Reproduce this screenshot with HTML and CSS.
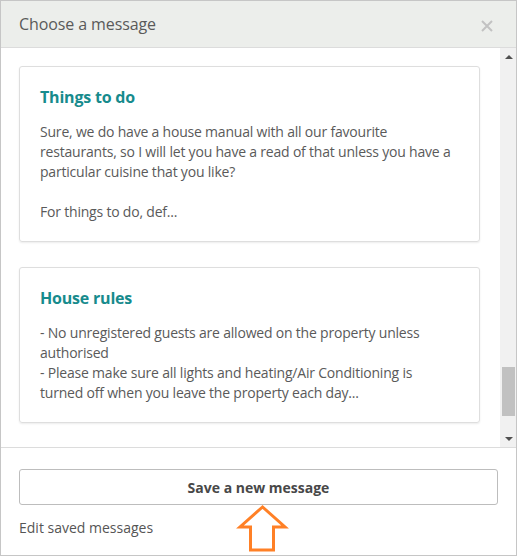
FILE: index.html
```html
<!DOCTYPE html>
<html>

<head>
    <title>Choose a message</title>
    <link rel="stylesheet" href="styles.css">
</head>

<body>
    <div class="dialog">
        <div class="dialog-head">
            <span class="dialog-title">Choose a message</span>
            <svg class="close" width="14" height="14" viewBox="0 0 14 14">
                <path d="M2 2 L12 12 M12 2 L2 12" stroke="#c2c2c2" stroke-width="2" />
            </svg>
        </div>

        <div class="list-wrap">
            <div class="msg-list" id="list">
                <div class="card">
                    <h3 class="card-title">Welcome</h3>
                    <p class="card-text">Hi! Thanks so much for booking with us, we are really looking forward to having you stay and showing you around the neighbourhood.<br><br>Let me know if you have any questions before...</p>
                </div>
                <div class="card">
                    <h3 class="card-title">Check-in instructions</h3>
                    <p class="card-text">The key is in the lockbox next to the front door. The code is the last four digits of your phone number, just push the button down to open it.<br><br>The flat is on the second floor, first door...</p>
                </div>
                <div class="card">
                    <h3 class="card-title">Wi-Fi</h3>
                    <p class="card-text">The network name and password are on the little card on the fridge, and there is a second router in the bedroom if the signal is weak.<br><br>If it drops out, turn the router off and on again...</p>
                </div>
                <div class="card">
                    <h3 class="card-title">Parking</h3>
                    <p class="card-text">There is one free space in the garage under the building, number 12. The remote for the gate is on the key ring with the house keys and the post box key.<br><br>Street parking is free after 6pm...</p>
                </div>
                <div class="card">
                    <h3 class="card-title">Early check-in</h3>
                    <p class="card-text">Unfortunately we have guests leaving that morning, so the earliest we can do is 2pm. You are welcome to drop your bags off in the storage room downstairs from 11am though, and grab a coffee at the cafe on the corner.<br><br>Just send me a message when...</p>
                </div>
                <div class="card">
                    <h3 class="card-title">Late check-out</h3>
                    <p class="card-text">No problem at all, there is nobody arriving after you so you can stay until 1pm. Just leave the keys on the kitchen table and pull the door closed behind you.<br><br>Have a safe trip home...</p>
                </div>
                <div class="card">
                    <h3 class="card-title">Getting here</h3>
                    <p class="card-text">The easiest way from the airport is the express train to the central station, then the number 4 tram which stops right outside the building. A taxi takes about forty minutes depending on traffic and costs around 35 euros.<br><br>If you are driving, the postcode...</p>
                </div>
                <div class="card">
                    <h3 class="card-title">Towels and linen</h3>
                    <p class="card-text">Fresh towels and linen are in the wardrobe in the hallway. Extra blankets and pillows are in the top drawer, and the hairdryer is under the bathroom sink.<br><br>Beach towels are in the basket...</p>
                </div>
                <div class="card">
                    <h3 class="card-title">Thank you</h3>
                    <p class="card-text">Thanks so much for staying with us! We hope you had a lovely time in the city and that the flat had everything you needed, we really enjoyed having you.<br><br>It would be great if you could leave us a review...</p>
                </div>
                <div class="card">
                    <h3 class="card-title">Rubbish and recycling</h3>
                    <p class="card-text">The bins are in the courtyard downstairs. Blue is for paper and plastic, green for glass and black for everything else. Collection is on Tuesday and Friday mornings, so please take it down the night before if you can.<br><br>There are spare bags under...</p>
                </div>
                <div class="card">
                    <h3 class="card-title">Heating</h3>
                    <p class="card-text">The thermostat is in the hallway next to the bathroom door. Please turn it down when you go out for the day, it warms up again in about twenty minutes.<br><br>The radiators in the bedroom...</p>
                </div>
                <div class="card">
                    <h3 class="card-title">Laundry</h3>
                    <p class="card-text">The washing machine is in the kitchen cupboard and there is detergent on the shelf above it. There is a drying rack behind the bathroom door.<br><br>Please do not use the dryer setting...</p>
                </div>
                <div class="card" id="first">
                    <h3 class="card-title">Things to do</h3>
                    <p class="card-text">Sure, we do have a house manual with all our favourite restaurants, so I will let you have a read of that unless you have a particular cuisine that you like?<br><br>For things to do, def...</p>
                </div>
                <div class="card">
                    <h3 class="card-title">House rules</h3>
                    <p class="card-text">- No unregistered guests are allowed on the property unless authorised<br>- Please make sure all lights and heating/Air Conditioning is turned off when you leave the property each day...</p>
                </div>
                <div class="card">
                    <h3 class="card-title">Quiet hours</h3>
                    <p class="card-text">Please keep the noise down between 10pm and 8am, thank you!</p>
                </div>
            </div>

            <div class="scrollbar">
                <div class="sb-btn"><span class="arrow-up"></span></div>
                <div class="sb-track" id="track">
                    <div class="sb-thumb" id="thumb"></div>
                </div>
                <div class="sb-btn"><span class="arrow-down"></span></div>
            </div>
        </div>

        <div class="dialog-foot">
            <button class="btn-save">Save a new message</button>
            <a class="edit-link">Edit saved messages</a>
        </div>

        <svg class="pointer" width="54" height="52" viewBox="0 0 54 52">
            <polygon points="26.5,4 4,24 14.5,24 14.5,47 37.5,47 37.5,24 49,24" fill="none" stroke="#ff8026" stroke-width="3" />
        </svg>
    </div>

    <script src="main.js"></script>
</body>

</html>
```
FILE: styles.css
```css
body {
    margin: 0;
    font-family: "Open Sans", "Liberation Sans", sans-serif;
    color: #555;
}

.dialog {
    position: relative;
    width: 517px;
    height: 556px;
    box-sizing: border-box;
    border: 1px solid #c6c6c6;
    display: flex;
    flex-direction: column;
    background: #fff;
}

.dialog-head {
    height: 46px;
    flex: none;
    background: #eceeeb;
    border-bottom: 1px solid #dcdcdc;
    display: flex;
    align-items: center;
    justify-content: space-between;
    padding: 0 22px 0 18px;
}

.dialog-title {
    font-size: 16px;
    color: #5a5a5a;
    margin-top: -1px;
    letter-spacing: -0.1px;
}

.close {
    margin-top: 4px;
}

.list-wrap {
    flex: 1;
    display: flex;
    min-height: 0;
}

.msg-list {
    flex: 1;
    overflow-y: scroll;
    scrollbar-width: none;
    padding: 18px 20px 18px 18px;
    position: relative;
}

.msg-list::-webkit-scrollbar {
    display: none;
}

.card {
    border: 1px solid #dedede;
    border-radius: 3px;
    box-shadow: 0 1px 2px rgba(0, 0, 0, 0.08);
    padding: 19px 24px 19px 20px;
    margin-bottom: 25px;
}

.card:last-child {
    margin-bottom: 0;
}

.card-title {
    margin: 0 0 14px 0;
    font-size: 16px;
    line-height: 22px;
    font-weight: 700;
    color: #178b8d;
    letter-spacing: -0.2px;
}

.card-text {
    margin: 0;
    font-size: 14px;
    line-height: 20px;
    color: #5a5a5a;
    letter-spacing: -0.2px;
}

/* fake scrollbar, thumb size set in main.js */
.scrollbar {
    width: 16px;
    flex: none;
    display: flex;
    flex-direction: column;
    background: #f1f1f1;
}

.sb-btn {
    height: 17px;
    display: flex;
    align-items: center;
    justify-content: center;
    padding-left: 1px;
}

.arrow-up {
    border-left: 4px solid transparent;
    border-right: 4px solid transparent;
    border-bottom: 4px solid #505050;
}

.arrow-down {
    border-left: 4px solid transparent;
    border-right: 4px solid transparent;
    border-top: 4px solid #505050;
}

.sb-track {
    flex: 1;
    position: relative;
}

.sb-thumb {
    position: absolute;
    left: 2px;
    right: 1px;
    background: #c1c1c1;
}

.dialog-foot {
    flex: none;
    border-top: 1px solid #dcdcdc;
    padding: 21px 18px 0 18px;
    height: 86px;
    display: flex;
    flex-direction: column;
}

.btn-save {
    height: 36px;
    border: 1px solid #bdbdbd;
    border-radius: 3px;
    background: #fff;
    font-family: inherit;
    font-size: 14px;
    font-weight: 700;
    color: #484848;
}

.edit-link {
    margin-top: 13px;
    font-size: 14px;
    line-height: 20px;
    color: #555;
}

.pointer {
    position: absolute;
    left: 235px;
    top: 502px;
}
```
FILE: main.js
```js
var list = document.getElementById("list");
var first = document.getElementById("first");
var track = document.getElementById("track");
var thumb = document.getElementById("thumb");

list.scrollTop = first.offsetTop - 18;

var h = track.clientHeight;
thumb.style.height = Math.round(h * list.clientHeight / list.scrollHeight) + "px";
thumb.style.top = Math.round(h * list.scrollTop / list.scrollHeight) + "px";
```
